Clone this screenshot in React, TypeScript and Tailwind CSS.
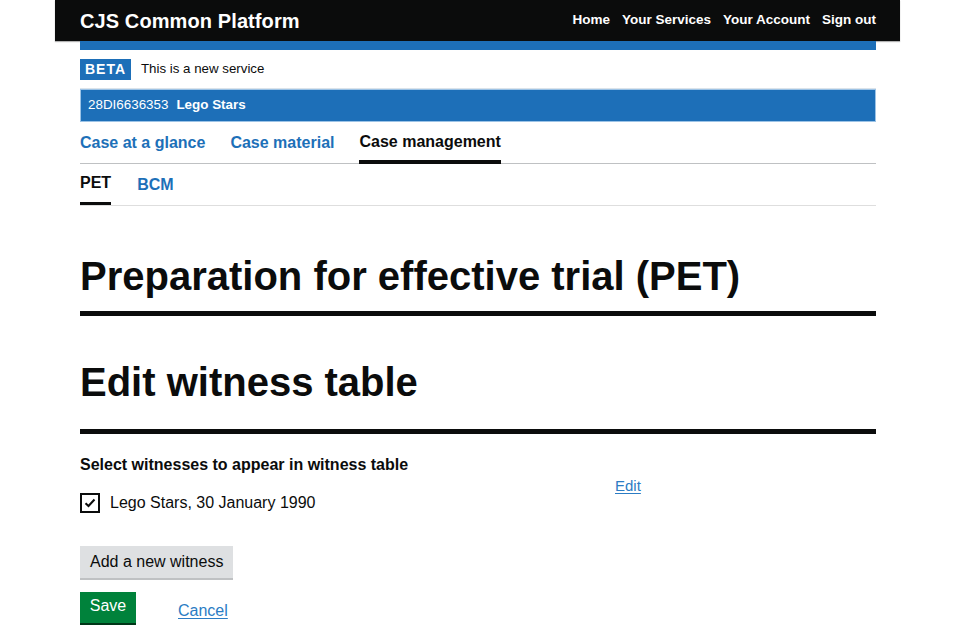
import React from "react";

export default function App() {
  return (
    <div className="min-h-[640px] bg-white text-[#0b0c0c]" style={{ fontFamily: '"Liberation Sans", Arial, sans-serif' }}>
      <header className="ml-[55px] w-[845px] h-[41px] bg-[#0b0c0c] flex items-center justify-between pl-[25px] pr-[24px] shadow-[0_1px_1px_rgba(0,0,0,0.3)]">
        <span className="text-white font-bold text-[20px] tracking-[0.1px]">CJS Common Platform</span>
        <nav className="flex gap-[12px] text-white font-bold text-[13.5px]">
          <a>Home</a>
          <a>Your Services</a>
          <a>Your Account</a>
          <a>Sign out</a>
        </nav>
      </header>
      <main className="ml-[80px] w-[796px]">
        <div className="h-[9px] bg-[#1d6fb8]" />
        <div className="h-[39px] flex items-center gap-[10px] border-b border-[#dbe3ea]">
          <span className="bg-[#1d6fb8] text-white font-bold text-[14px] tracking-[1px] h-[21px] w-[51px] flex items-center justify-center">BETA</span>
          <span className="text-[13.3px]">This is a new service</span>
        </div>
        <div className="h-[33px] bg-[#1d6fb8] border border-[#9cc3e6] flex items-center pl-[7px] text-white text-[13.4px] gap-[8px]">
          <span>28DI6636353</span>
          <span className="font-bold">Lego Stars</span>
        </div>
        <div className="flex gap-[25px] border-b border-[#bfc1c3] h-[42px] text-[16px] font-bold">
          <a className="text-[#1d70b8] flex items-center">Case at a glance</a>
          <a className="text-[#1d70b8] flex items-center">Case material</a>
          <a className="flex items-center border-b-4 border-[#0b0c0c] relative top-[1px]">Case management</a>
        </div>
        <div className="flex gap-[26px] border-b border-[#dedede] h-[42px] text-[16px] font-bold">
          <a className="flex items-center border-b-[3px] border-[#0b0c0c]">PET</a>
          <a className="text-[#1d70b8] flex items-center">BCM</a>
        </div>
        <h1 className="mt-[47px] text-[40px] font-bold leading-[46px]">Preparation for effective trial (PET)</h1>
        <div className="mt-[12px] h-[5px] bg-[#0b0c0c]" />
        <h2 className="mt-[43px] text-[40px] font-bold leading-[46px]">Edit witness table</h2>
        <div className="mt-[24px] h-[5px] bg-[#0b0c0c]" />
        <div className="flex mt-[21px]">
          <div className="w-[535px]">
            <p className="text-[16px] font-bold leading-[19px]">Select witnesses to appear in witness table</p>
            <label className="mt-[17px] flex items-center gap-[10px] text-[16px]">
              <span className="w-[20px] h-[20px] border-2 border-[#0b0c0c] flex items-center justify-center">
                <svg width="12" height="10" viewBox="0 0 12 10">
                  <path d="M1.5 5.2 L4.5 8 L10.5 1.5" fill="none" stroke="#0b0c0c" strokeWidth="2" />
                </svg>
              </span>
              <span>Lego Stars, 30 January 1990</span>
            </label>
          </div>
          <a className="mt-[20px] h-[18px] text-[15px] text-[#2b7cc4] underline underline-offset-2">Edit</a>
        </div>
        <button className="mt-[31px] h-[32px] px-[10px] bg-[#dee0e2] shadow-[0_2px_0_#bfc1c3] text-[16px] text-[#0b0c0c]">Add a new witness</button>
        <div className="mt-[13px] flex items-center gap-[42px]">
          <button className="h-[31px] w-[56px] bg-[#00823b] shadow-[0_2px_0_#003618] text-white text-[16px] pb-[2px]">Save</button>
          <a className="mt-[8px] text-[16px] text-[#2b7cc4] underline underline-offset-2">Cancel</a>
        </div>
      </main>
    </div>
  );
}
